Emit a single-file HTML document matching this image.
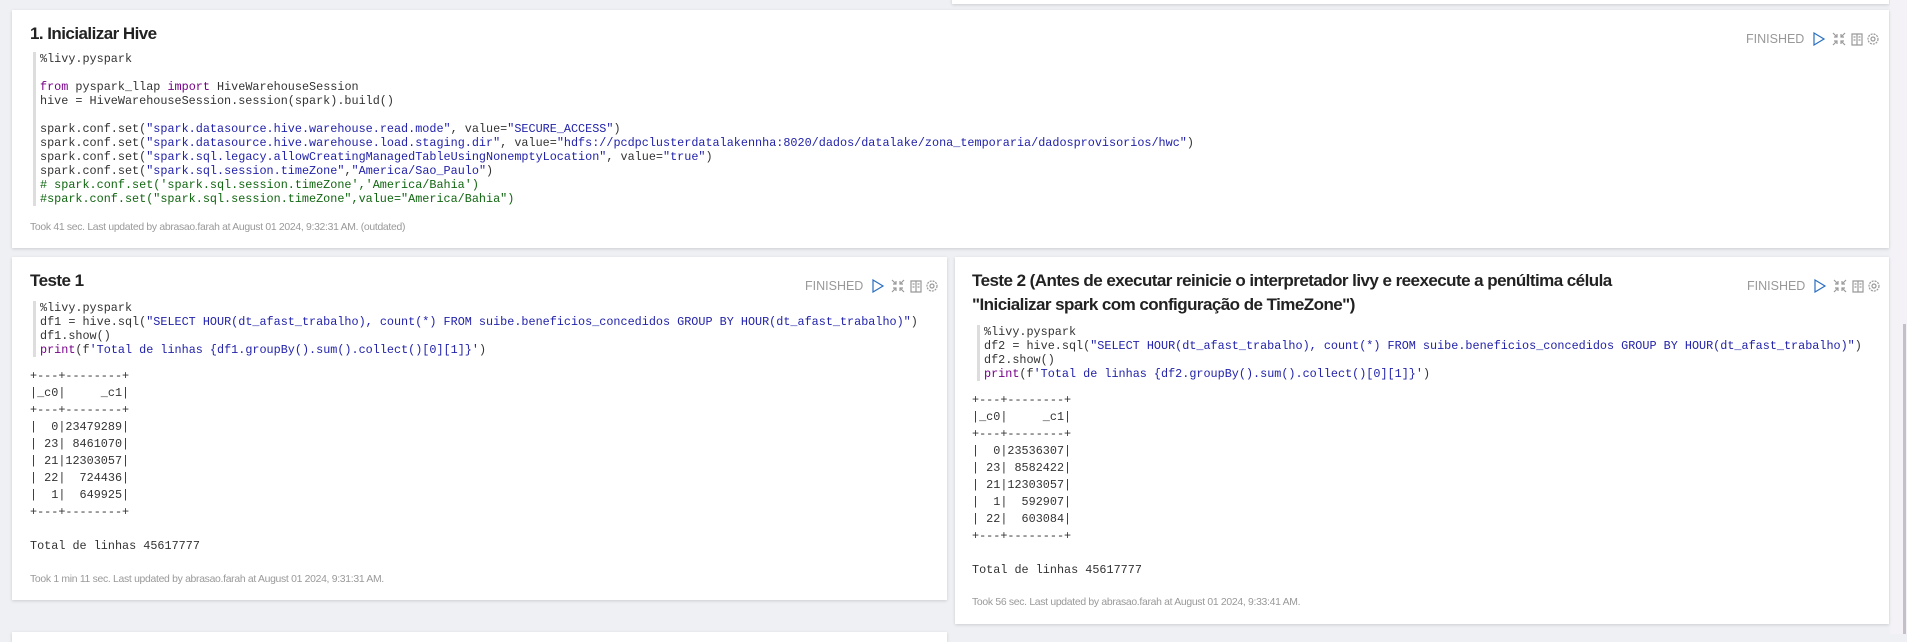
<!DOCTYPE html>
<html><head><meta charset="utf-8"><style>
*{margin:0;padding:0;box-sizing:border-box}
body{width:1907px;height:634px;overflow:hidden;background:#eef0f4;font-family:"Liberation Sans",sans-serif;position:relative}
.p{position:absolute;background:#fff;box-shadow:0 1px 3px rgba(0,0,0,.15)}
.t{position:absolute;font-weight:bold;font-size:17px;letter-spacing:-0.55px;color:#222;line-height:24px}
.st{position:absolute;display:flex;align-items:center;gap:9px;color:#999;font-size:12.5px}
.code{position:absolute;border-left:3px solid #ddd;padding-left:4px;font-family:"Liberation Mono",monospace;font-size:11.8px;line-height:14px;color:#333;white-space:pre;letter-spacing:0}
.out{position:absolute;font-family:"Liberation Mono",monospace;font-size:11.8px;line-height:17px;color:#333;white-space:pre}
.ft{position:absolute;font-size:10.4px;color:#999;letter-spacing:-0.3px}
.k{color:#708}.s{color:#22a}.c{color:#161}
</style></head><body>
<div class="p" style="left:952px;top:-5px;width:937px;height:9px"></div>
<div style="position:absolute;left:1890px;top:0;width:17px;height:634px;background:#f4f2f7"></div>
<div style="position:absolute;left:1903px;top:324px;width:3px;height:310px;background:#c4c0c8"></div>

<div class="p" style="left:12px;top:10px;width:1877px;height:238px">
<div class="t" style="left:18px;top:12px">1. Inicializar Hive</div>
<div class="st" style="left:1734px;top:22px"><span>FINISHED</span>
<svg width="66" height="14" viewBox="0 0 66 14" fill="none" stroke-width="1.2"><path d="M1 1 L11 7 L1 13 Z" stroke="#2a6fc0"/><path d="M20 1l4 4M24 2v3h-3M32 1l-4 4M28 2v3h3M20 13l4-4M24 12v-3h-3M32 13l-4-4M28 12v-3h3" stroke="#999"/><path d="M39 2h5v11h-5zM44 2h5v11h-5zM40.5 5h2M40.5 8h2M45.5 5h2M45.5 8h2" stroke="#999"/><circle cx="60" cy="7" r="5" stroke="#999" stroke-dasharray="2 1"/><circle cx="60" cy="7" r="2" stroke="#999"/></svg></div>
<div class="code" style="left:21px;top:42px">%livy.pyspark

<span class="k">from</span> pyspark_llap <span class="k">import</span> HiveWarehouseSession
hive = HiveWarehouseSession.session(spark).build()

spark.conf.set(<span class="s">"spark.datasource.hive.warehouse.read.mode"</span>, value=<span class="s">"SECURE_ACCESS"</span>)
spark.conf.set(<span class="s">"spark.datasource.hive.warehouse.load.staging.dir"</span>, value=<span class="s">"hdfs://pcdpclusterdatalakennha:8020/dados/datalake/zona_temporaria/dadosprovisorios/hwc"</span>)
spark.conf.set(<span class="s">"spark.sql.legacy.allowCreatingManagedTableUsingNonemptyLocation"</span>, value=<span class="s">"true"</span>)
spark.conf.set(<span class="s">"spark.sql.session.timeZone"</span>,<span class="s">"America/Sao_Paulo"</span>)
<span class="c"># spark.conf.set('spark.sql.session.timeZone','America/Bahia')</span>
<span class="c">#spark.conf.set("spark.sql.session.timeZone",value="America/Bahia")</span></div>
<div class="ft" style="left:18px;top:212px">Took 41 sec. Last updated by abrasao.farah at August 01 2024, 9:32:31 AM. (outdated)</div>
</div>

<div class="p" style="left:12px;top:257px;width:935px;height:343px">
<div class="t" style="left:18px;top:12px">Teste 1</div>
<div class="st" style="left:793px;top:22px"><span>FINISHED</span>
<svg width="66" height="14" viewBox="0 0 66 14" fill="none" stroke-width="1.2"><path d="M1 1 L11 7 L1 13 Z" stroke="#2a6fc0"/><path d="M20 1l4 4M24 2v3h-3M32 1l-4 4M28 2v3h3M20 13l4-4M24 12v-3h-3M32 13l-4-4M28 12v-3h3" stroke="#999"/><path d="M39 2h5v11h-5zM44 2h5v11h-5zM40.5 5h2M40.5 8h2M45.5 5h2M45.5 8h2" stroke="#999"/><circle cx="60" cy="7" r="5" stroke="#999" stroke-dasharray="2 1"/><circle cx="60" cy="7" r="2" stroke="#999"/></svg></div>
<div class="code" style="left:21px;top:44px">%livy.pyspark
df1 = hive.sql(<span class="s">"SELECT HOUR(dt_afast_trabalho), count(*) FROM suibe.beneficios_concedidos GROUP BY HOUR(dt_afast_trabalho)"</span>)
df1.show()
<span class="k">print</span>(f<span class="s">'Total de linhas {df1.groupBy().sum().collect()[0][1]}'</span>)</div>
<div class="out" style="left:18px;top:111px">+---+--------+
|_c0|     _c1|
+---+--------+
|  0|23479289|
| 23| 8461070|
| 21|12303057|
| 22|  724436|
|  1|  649925|
+---+--------+

Total de linhas 45617777</div>
<div class="ft" style="left:18px;top:317px">Took 1 min 11 sec. Last updated by abrasao.farah at August 01 2024, 9:31:31 AM.</div>
</div>

<div class="p" style="left:955px;top:257px;width:934px;height:367px">
<div class="t" style="left:17px;top:12px">Teste 2 (Antes de executar reinicie o interpretador livy e reexecute a penúltima célula<br>"Inicializar spark com configuração de TimeZone")</div>
<div class="st" style="left:792px;top:22px"><span>FINISHED</span>
<svg width="66" height="14" viewBox="0 0 66 14" fill="none" stroke-width="1.2"><path d="M1 1 L11 7 L1 13 Z" stroke="#2a6fc0"/><path d="M20 1l4 4M24 2v3h-3M32 1l-4 4M28 2v3h3M20 13l4-4M24 12v-3h-3M32 13l-4-4M28 12v-3h3" stroke="#999"/><path d="M39 2h5v11h-5zM44 2h5v11h-5zM40.5 5h2M40.5 8h2M45.5 5h2M45.5 8h2" stroke="#999"/><circle cx="60" cy="7" r="5" stroke="#999" stroke-dasharray="2 1"/><circle cx="60" cy="7" r="2" stroke="#999"/></svg></div>
<div class="code" style="left:22px;top:68px">%livy.pyspark
df2 = hive.sql(<span class="s">"SELECT HOUR(dt_afast_trabalho), count(*) FROM suibe.beneficios_concedidos GROUP BY HOUR(dt_afast_trabalho)"</span>)
df2.show()
<span class="k">print</span>(f<span class="s">'Total de linhas {df2.groupBy().sum().collect()[0][1]}'</span>)</div>
<div class="out" style="left:17px;top:135px">+---+--------+
|_c0|     _c1|
+---+--------+
|  0|23536307|
| 23| 8582422|
| 21|12303057|
|  1|  592907|
| 22|  603084|
+---+--------+

Total de linhas 45617777</div>
<div class="ft" style="left:17px;top:340px">Took 56 sec. Last updated by abrasao.farah at August 01 2024, 9:33:41 AM.</div>
</div>
<div class="p" style="left:12px;top:632px;width:935px;height:10px"></div>
</body></html>
